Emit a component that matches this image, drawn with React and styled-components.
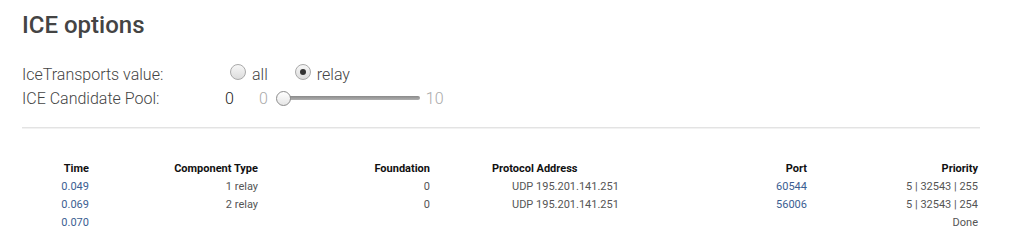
import React from "react"
import styled, { createGlobalStyle } from "styled-components"

const GlobalStyle = createGlobalStyle`
  html, body { margin: 0; padding: 0; background: #fff; }
  body { font-family: Roboto, "Liberation Sans", sans-serif; color: #444; }
`

const Page = styled.div`
  padding: 11px 36px 0 22px;
`

const Title = styled.h2`
  margin: 0 0 23px;
  font-size: 24px;
  font-weight: 500;
  line-height: 28px;
  color: #444;
`

const OptionRow = styled.div`
  display: flex;
  align-items: center;
  height: 24px;
  font-size: 16px;
  font-weight: 300;
  color: #444;
`

const Label = styled.span`
  width: 203px;
  flex-shrink: 0;
`

const RadioItem = styled.label`
  display: flex;
  align-items: center;
  margin-right: ${p => p.$gap || 0}px;
`

const RadioDot = styled.span`
  width: 16px;
  height: 16px;
  box-sizing: border-box;
  border-radius: 50%;
  border: 1px solid #a9a9a9;
  background: linear-gradient(#f7f7f7, #dcdcdc);
  margin: 0 6px 0 5px;
  display: flex;
  align-items: center;
  justify-content: center;
  position: relative;
  top: -2px;
  &::after {
    content: "";
    width: 6px;
    height: 6px;
    border-radius: 50%;
    background: ${p => (p.$checked ? "#333" : "transparent")};
  }
`

const Value = styled.span`
  color: ${p => p.$muted ? "#aaa" : "#222"};
  margin-right: ${p => p.$mr || 0}px;
`

const Slider = styled.div`
  position: relative;
  width: 144px;
  height: 16px;
  margin-right: 6px;
  display: flex;
  align-items: center;
`

const Track = styled.div`
  flex: 1;
  height: 4px;
  margin-left: 6px;
  border-radius: 2px;
  background: linear-gradient(#8a8a8a, #b0b0b0);
`

const Thumb = styled.div`
  position: absolute;
  left: 0;
  top: 1px;
  width: 15px;
  height: 15px;
  box-sizing: border-box;
  border-radius: 50%;
  border: 1px solid #8c8c8c;
  background: linear-gradient(#ffffff, #e6e6e6);
`

const Divider = styled.hr`
  margin: 17px 0 31px;
  border: 0;
  border-top: 1px solid #e3e3e3;
  border-bottom: 1px solid #f2f2f2;
`

const Table = styled.div`
  display: grid;
  grid-template-columns: 69px 169px 172px 208px 169px 1fr;
  grid-auto-rows: 18px;
  font-size: 11px;
  line-height: 18px;
`

const Cell = styled.div`
  text-align: ${p => p.$left ? "left" : "right"};
  padding: 0 2px 0 ${p => p.$pl || 0}px;
  white-space: nowrap;
  font-weight: ${p => p.$head ? 700 : 400};
  color: ${p => p.$head ? "#111" : p.$blue ? "#3b5e92" : "#555"};
`

const rows = [
  ["0.049", "1 relay", "0", "UDP 195.201.141.251", "60544", "5 | 32543 | 255"],
  ["0.069", "2 relay", "0", "UDP 195.201.141.251", "56006", "5 | 32543 | 254"],
  ["0.070", "", "", "", "", "Done"],
]

export default function App() {
  return (
    <Page>
      <GlobalStyle />
      <Title>ICE options</Title>
      <OptionRow>
        <Label>IceTransports value:</Label>
        <RadioItem $gap={22}><RadioDot />all</RadioItem>
        <RadioItem><RadioDot $checked />relay</RadioItem>
      </OptionRow>
      <OptionRow>
        <Label>ICE Candidate Pool:</Label>
        <Value $mr={25}>0</Value>
        <Value $muted $mr={8}>0</Value>
        <Slider>
          <Thumb />
          <Track />
        </Slider>
        <Value $muted>10</Value>
      </OptionRow>
      <Divider />
      <Table>
        <Cell $head>Time</Cell>
        <Cell $head>Component Type</Cell>
        <Cell $head>Foundation</Cell>
        <Cell $head $left $pl={60}>Protocol Address</Cell>
        <Cell $head>Port</Cell>
        <Cell $head>Priority</Cell>
        {rows.map((r, i) => (
          <React.Fragment key={i}>
            <Cell $blue>{r[0]}</Cell>
            <Cell>{r[1]}</Cell>
            <Cell>{r[2]}</Cell>
            <Cell $left $pl={80}>{r[3]}</Cell>
            <Cell $blue>{r[4]}</Cell>
            <Cell>{r[5]}</Cell>
          </React.Fragment>
        ))}
      </Table>
    </Page>
  )
}
